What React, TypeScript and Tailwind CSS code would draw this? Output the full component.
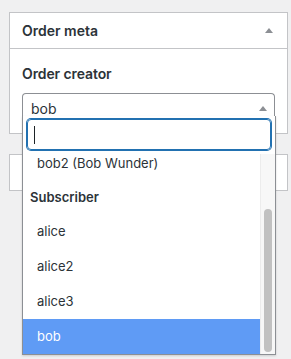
import React from "react";

function Caret({ className }: { className?: string }) {
    return (
        <svg className={className} width="8" height="5" viewBox="0 0 8 5">
            <path d="M0 5 L4 0 L8 5 Z" fill="#8c8f94" />
        </svg>
    );
}

const users = ["alice", "alice2", "alice3"];

export default function App() {
    return (
        <div
            className="min-h-[359px] w-[291px] bg-[#f0f0f1] pt-[12px] pl-[9px] pr-[3px] text-[#2c3338]"
            style={{ fontFamily: "Inter, 'Noto Sans', sans-serif" }}
        >
            {/* order meta box */}
            <div className="border border-[#c3c4c7] bg-white">
                <div className="flex h-[36px] items-center justify-between border-b border-[#c3c4c7] pl-[12px] pr-[14px]">
                    <span className="text-[14px] font-semibold">Order meta</span>
                    <Caret />
                </div>
                <div className="px-[12px] pt-[16px] pb-[10px]">
                    <div className="text-[14px] font-semibold leading-[18px] tracking-[-0.1px]">Order creator</div>
                    <div className="relative mt-[10px]">
                        <div className="flex h-[30px] items-center justify-between rounded-t-[4px] border border-[#8c8f94] border-b-0 pl-[8px] pr-[7px] text-[14px]">
                            <span>bob</span>
                            <Caret />
                        </div>
                        {/* open dropdown */}
                        <div className="absolute left-0 top-[23px] z-10 w-[254px] border border-t-0 border-[#8c8f94] bg-white shadow-[0_1px_2px_rgba(0,0,0,0.15)]">
                            <div className="px-[4px] pt-[3px] pb-[4px]">
                                <div className="flex h-[31px] items-center rounded-[4px] border border-[#2271b1] px-[6px] shadow-[0_0_0_1px_#2271b1]">
                                    <span className="h-[18px] w-px bg-[#1d2327]" />
                                </div>
                            </div>
                            <div className="flex h-[200px]">
                                <div className="flex-1 overflow-hidden text-[13px]">
                                    <div className="-mt-[8px]">
                                        <div className="flex h-[35px] items-center pl-[14px]">bob2 (Bob Wunder)</div>
                                        <div className="flex h-[33px] items-center pl-[7px] font-semibold">Subscriber</div>
                                        {users.map((u) => (
                                            <div key={u} className="flex h-[35px] items-center pl-[14px]">
                                                {u}
                                            </div>
                                        ))}
                                        <div className="flex h-[35px] items-center bg-[#5f9bf5] pl-[14px] text-white">bob</div>
                                    </div>
                                </div>
                                <div className="flex w-[15px] border-l border-[#ececec] bg-[#f7f7f7] pl-[3px] pr-[3px] pt-[55px] pb-[2px]">
                                    <div className="w-full rounded-full bg-[#c1c1c1]" />
                                </div>
                            </div>
                        </div>
                    </div>
                </div>
            </div>
            {/* next box, collapsed */}
            <div className="mt-[20px] h-[37px] border border-[#c3c4c7] bg-white" />
        </div>
    );
}
